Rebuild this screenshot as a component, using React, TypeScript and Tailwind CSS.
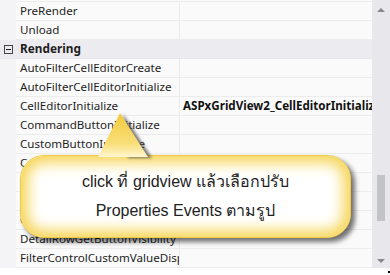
import React from 'react';

type Row = { name: string; value?: string; category?: boolean };

const rows: Row[] = [
  { name: 'PreRender' },
  { name: 'Unload' },
  { name: 'Rendering', category: true },
  { name: 'AutoFilterCellEditorCreate' },
  { name: 'AutoFilterCellEditorInitialize' },
  { name: 'CellEditorInitialize', value: 'ASPxGridView2_CellEditorInitialize' },
  { name: 'CommandButtonInitialize' },
  { name: 'CustomButtonInitialize' },
  { name: 'CustomColumnDisplayText' },
  { name: 'CustomErrorText' },
  { name: 'CustomJSProperties' },
  { name: 'CustomUnboundColumnData' },
  { name: 'DetailRowGetButtonVisibility' },
  { name: 'FilterControlCustomValueDisplayText' },
];

const PropRow: React.FC<{ row: Row }> = ({ row }) => {
  if (row.category) {
    return (
      <div className="flex h-[19px] items-center bg-[#ececf0] border-b border-[#e6e6ea]">
        <div className="w-4 flex items-center justify-center">
          <div className="w-[9px] h-[9px] border border-[#444] flex items-center justify-center">
            <div className="w-[5px] h-px bg-[#222]" />
          </div>
        </div>
        <span className="pl-1 font-bold text-[11.8px] text-[#1e1e1e]">{row.name}</span>
      </div>
    );
  }
  return (
    <div className="flex h-[19px]">
      <div className="w-4 bg-[#f4f4f6]" />
      <div className="w-[164px] pl-1 border-b border-r border-[#ececec] bg-[#fafafa] overflow-hidden whitespace-nowrap text-[11.6px] leading-[18px] text-[#1e1e1e]">
        {row.name}
      </div>
      <div className="flex-1 pl-[3px] border-b border-[#ececec] bg-[#fafafa] overflow-hidden whitespace-nowrap text-[11.6px] leading-[18px] font-bold text-[#111]">
        {row.value}
      </div>
    </div>
  );
};

export default function App() {
  return (
    <div className="relative w-[390px] h-[275px] overflow-hidden bg-white font-['Noto_Sans',sans-serif]">
      <div className="flex h-[268px]">
        <div className="flex-1 flex flex-col overflow-hidden">
          <div className="flex h-[2px]">
            <div className="w-4 bg-[#f4f4f6]" />
            <div className="flex-1 bg-[#fafafa] border-b border-[#ececec]" />
          </div>
          {rows.map((r, i) => (
            <PropRow key={i} row={r} />
          ))}
        </div>
        <div className="w-[18px] bg-[#e8e8ec] flex flex-col items-center">
          <div className="mt-[8px] w-0 h-0 border-l-[4px] border-r-[4px] border-b-[4px] border-l-transparent border-r-transparent border-b-[#888]" />
          <div className="mt-[163px] w-2 h-[46px] bg-[#c2c3c9]" />
          <div className="mt-auto mb-[5px] w-0 h-0 border-l-[4px] border-r-[4px] border-t-[4px] border-l-transparent border-r-transparent border-t-[#888]" />
        </div>
      </div>
      <div className="absolute right-0 bottom-[2px] w-[2px] h-[2px] bg-black" />

      {/* callout */}
      <div className="absolute left-[20px] top-[155px] w-[331px] h-[83px] rounded-[24px] bg-white border border-[#f1c941] shadow-[inset_0_0_14px_7px_#f6d659,4px_4px_5px_rgba(0,0,0,0.55)]" />
      <svg className="absolute left-[90px] top-[110px]" width="70" height="52" viewBox="0 0 70 52">
        <defs>
          <linearGradient id="tail" x1="0" y1="0" x2="0" y2="1">
            <stop offset="0" stopColor="#f3c93a" />
            <stop offset="0.7" stopColor="#f9df7a" />
            <stop offset="1" stopColor="#fff6d0" />
          </linearGradient>
          <filter id="sh" x="-20%" y="-20%" width="150%" height="150%">
            <feGaussianBlur stdDeviation="1.5" />
          </filter>
        </defs>
        <path d="M33 4 L62 48 L38 48 Z" fill="#444" opacity="0.7" filter="url(#sh)" />
        <path d="M30 3 L58 47 L8 47 Z" fill="url(#tail)" />
      </svg>
      <div className="absolute left-[20px] top-[155px] w-[331px] h-[83px] flex flex-col items-center justify-center gap-[9px] text-[16px] text-[#222] font-['Liberation_Sans',sans-serif]">
        <span className="leading-[20px]">click ที่ gridview แล้วเลือกปรับ</span>
        <span className="leading-[20px]">Properties Events ตามรูป</span>
      </div>
    </div>
  );
}
